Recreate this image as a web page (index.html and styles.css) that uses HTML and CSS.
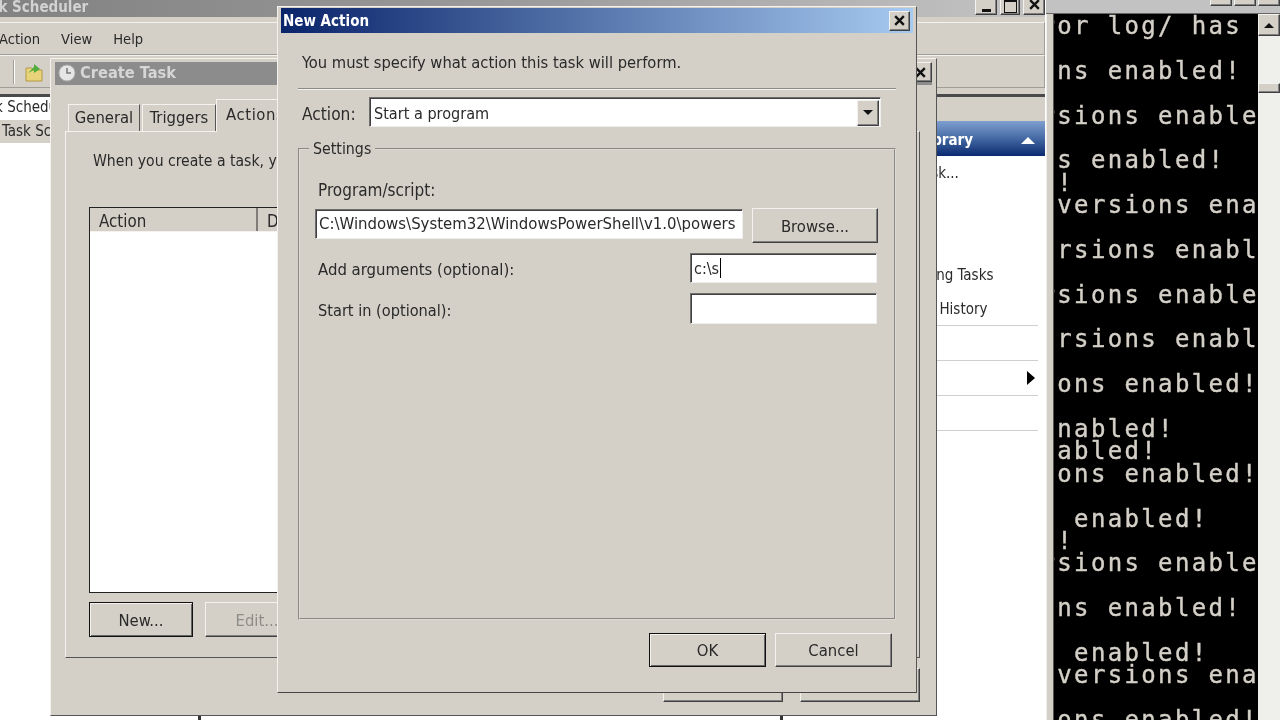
FILE: index.html
```html
<!DOCTYPE html>
<html lang="en">
<head>
<meta charset="utf-8">
<title>New Action</title>
<link rel="stylesheet" href="styles.css">
</head>
<body>
<div class="desktop">

  <section class="win win-sched">
    <header class="sched-title">
      <span class="sched-name">Task Scheduler</span>
      <div class="sched-btns">
        <span class="capbtn raised"><i class="glyph-min"></i></span>
        <span class="capbtn raised"><i class="glyph-max"></i></span>
        <span class="capbtn raised"><svg class="x-icon" viewBox="0 0 12 12"><path d="M2 2 10 10M10 2 2 10"/></svg></span>
      </div>
    </header>
    <nav class="sched-menu">
      <span>Action</span><span>View</span><span>Help</span>
    </nav>
    <div class="sched-tools">
      <i class="tool-sep"></i>
      <svg class="tool-icon" viewBox="0 0 18 20">
        <path d="M1 6h6l1 2h9v11H1z" fill="#e8d27a" stroke="#b59a45"/>
        <path d="M3 11 9 5V2l6 5-6 4V8z" fill="#4fae3c"/>
      </svg>
    </div>
    <div class="sched-body">
      <aside class="tree">
        <div class="tree-row">Task Scheduler (Local)</div>
        <div class="tree-row tree-sel">Task Scheduler Library</div>
      </aside>
      <div class="center-pane"></div>
      <aside class="actions">
        <div class="actions-head">Actions</div>
        <div class="actions-blue"><span>Task Scheduler Library</span><i class="tri-up"></i></div>
        <div class="act-row act-shift">Create Basic Task...</div>
        <div class="act-row">Create Task...</div>
        <div class="act-row">Import Task...</div>
        <div class="act-row">Display All Running Tasks</div>
        <div class="act-row act-shift act-last">Enable All Tasks History</div>
        <div class="act-row act-sep">New Folder...</div>
        <div class="act-row act-sep">View<i class="tri-right"></i></div>
        <div class="act-row act-sep">Refresh</div>
        <div class="act-row act-sep">Help</div>
      </aside>
    </div>
  </section>

  <section class="win win-term">
    <header class="term-title">
      <span class="capbtn raised"></span><span class="capbtn raised"></span><span class="capbtn raised"></span>
    </header>
    <div class="term-body">
      <div class="term-text">
        <div class="tl">ror log/ has</div>
        <div class="tl"></div>
        <div class="tl">ons enabled!</div>
        <div class="tl"></div>
        <div class="tl">rsions enable</div>
        <div class="tl"></div>
        <div class="tl">ns enabled!</div>
        <div class="tl">d!</div>
        <div class="tl"> versions ena</div>
        <div class="tl"></div>
        <div class="tl">ersions enabl</div>
        <div class="tl"></div>
        <div class="tl">rsions enable</div>
        <div class="tl"></div>
        <div class="tl">ersions enabl</div>
        <div class="tl"></div>
        <div class="tl">ions enabled!</div>
        <div class="tl"></div>
        <div class="tl">enabled!</div>
        <div class="tl">nabled!</div>
        <div class="tl">ions enabled!</div>
        <div class="tl"></div>
        <div class="tl">s enabled!</div>
        <div class="tl">d!</div>
        <div class="tl">rsions enable</div>
        <div class="tl"></div>
        <div class="tl">ons enabled!</div>
        <div class="tl"></div>
        <div class="tl">s enabled!</div>
        <div class="tl"> versions ena</div>
        <div class="tl"></div>
        <div class="tl">ions enabled!</div>
      </div>
      <div class="term-scroll">
        <span class="sb-btn raised"><i class="tri-up tri-dark"></i></span>
        <span class="sb-gap"></span>
        <span class="sb-thumb raised"></span>
      </div>
    </div>
  </section>

  <section class="win win-create">
    <header class="create-title">
      <svg class="clock" viewBox="0 0 18 18">
        <circle cx="9" cy="9" r="8" fill="#e6e6e6" stroke="#b0b0b0"/>
        <path d="M9 4v5h4" fill="none" stroke="#777" stroke-width="1.5"/>
      </svg>
      <span class="create-name">Create Task</span>
      <span class="capbtn raised create-close"><svg class="x-icon" viewBox="0 0 12 12"><path d="M2 2 10 10M10 2 2 10"/></svg></span>
    </header>
    <div class="tabs">
      <span class="tab">General</span>
      <span class="tab">Triggers</span>
      <span class="tab tab-active">Actions</span>
    </div>
    <div class="tab-panel">
      <p class="create-intro">When you create a task, you must specify the action that will occur when your task starts.</p>
      <div class="action-table">
        <div class="table-head">
          <span class="th th-action">Action</span>
          <span class="th">Details</span>
        </div>
      </div>
      <div class="table-btns">
        <button class="btn btn-default btn-new">New...</button>
        <button class="btn btn-new btn-off">Edit...</button>
        <button class="btn btn-new">Delete...</button>
      </div>
    </div>
    <div class="create-foot">
      <button class="btn btn-foot">OK</button>
      <button class="btn btn-foot">Cancel</button>
    </div>
  </section>

  <section class="win win-action">
    <header class="action-title">
      <span>New Action</span>
      <span class="capbtn raised action-close"><svg class="x-icon" viewBox="0 0 12 12"><path d="M2 2 10 10M10 2 2 10"/></svg></span>
    </header>
    <div class="action-body">
      <p class="action-intro">You must specify what action this task will perform.</p>
      <hr class="groove">
      <div class="action-row">
        <label class="action-label">Action:</label>
        <div class="combo sunken">
          <span class="combo-value">Start a program</span>
          <span class="combo-btn raised"><i class="tri-down"></i></span>
        </div>
      </div>
      <fieldset class="settings">
        <legend class="settings-legend">Settings</legend>
        <div class="field-label">Program/script:</div>
        <div class="prog-row">
          <div class="field sunken field-prog"><span class="prog-clip">C:\Windows\System32\WindowsPowerShell\v1.0\powershell.exe</span></div>
          <button class="btn btn-browse">Browse...</button>
        </div>
        <div class="arg-row">
          <span class="arg-label arg-wide">Add arguments (optional):</span>
          <div class="field sunken field-arg">c:\s<i class="caret"></i></div>
        </div>
        <div class="arg-row">
          <span class="arg-label">Start in (optional):</span>
          <div class="field sunken field-arg field-start"></div>
        </div>
      </fieldset>
      <div class="action-foot">
        <button class="btn btn-default btn-ok">OK</button>
        <button class="btn btn-ok">Cancel</button>
      </div>
    </div>
  </section>

</div>
</body>
</html>
```
FILE: styles.css
```css
* { box-sizing: border-box; }
html, body { margin: 0; height: 100%; }
body {
  overflow: hidden;
  background: #fff;
  font-family: "DejaVu Sans", Tahoma, sans-serif;
  font-stretch: condensed;
  font-size: 15px;
  color: #2a2a2a;
}
.desktop { position: relative; width: 1280px; height: 720px; overflow: hidden; background: #fff; filter: blur(0.35px); }
.win { position: absolute; display: flex; flex-direction: column; isolation: isolate; }
p { margin: 0; }
i { display: block; }

.raised {
  background: #d4d0c8;
  border: 1px solid;
  border-color: #f4f2ee #404040 #404040 #f4f2ee;
  box-shadow: inset -1px -1px #808080;
}
.sunken {
  background: #fff;
  border: 1px solid;
  border-color: #6e6e6e #eeeeee #eeeeee #6e6e6e;
  box-shadow: inset 1px 1px #404040;
}
.capbtn { display: flex; align-items: center; justify-content: center; flex: none; }
.x-icon { width: 13px; height: 13px; fill: none; stroke: #111; stroke-width: 2.2; }

.btn {
  font: inherit;
  font-size: 16.5px;
  color: inherit;
  background: #d4d0c8;
  border: 1px solid;
  border-color: #f4f2ee #404040 #404040 #f4f2ee;
  box-shadow: inset -1px -1px #808080;
  padding: 1px 0 0;
}
.btn-default { border-color: #111; box-shadow: inset 1px 1px #f4f2ee, inset -1px -1px #666; }
.btn-off { color: #8f8d88; }

/* Task Scheduler window */
.win-sched { left: -40px; top: 0; width: 1085px; height: 720px; background: #d4d0c8; }
.sched-title {
  height: 17px; flex: none; display: flex; justify-content: space-between;
  background: linear-gradient(90deg, #808080 0%, #9a9a9a 50%, #c4c4c4 100%);
}
.sched-name { font-weight: bold; color: #d2d2d2; padding-left: 14px; line-height: 14px; }
.sched-btns { display: flex; gap: 3px; margin-top: -6px; height: 21px; }
.sched-btns .capbtn { width: 22px; }
.sched-btns .capbtn:nth-child(2) { width: 20px; }
.glyph-min { width: 9px; height: 3px; background: #111; margin-top: 11px; }
.glyph-max { width: 13px; height: 13px; border: 1px solid #111; border-top-width: 2px; margin-top: 4px; }
.sched-menu {
  margin-top: 5px; height: 33px; flex: none; display: flex; align-items: center; gap: 21px;
  padding-left: 38px; border: 1px solid; border-color: #f4f2ee #a09d96 #a09d96 #f4f2ee;
  font-size: 14.6px;
}
.sched-tools {
  height: 33px; flex: none; display: flex; align-items: center; gap: 11px; padding-left: 52px;
  border: 1px solid; border-color: #f4f2ee #a09d96 #a09d96 #f4f2ee;
}
.tool-sep { width: 2px; height: 24px; border-left: 1px solid #a09d96; border-right: 1px solid #fff; }
.tool-icon { width: 18px; height: 20px; margin-left: -1px; }
.sched-body { margin-top: 6px; border-top: 3px solid #4a4a4a; flex: 1; display: flex; background: #fff; }
.tree { width: 238px; flex: none; }
.tree-row { height: 23px; line-height: 23px; white-space: nowrap; }
.tree-row:first-child { padding-left: 14px; line-height: 21px; }
.tree-sel { background: #d4d0c8; padding-left: 42px; }
.center-pane { width: 585px; flex: none; border: 1px solid #333; border-width: 0 3px; }
.actions { width: 262px; flex: none; padding-left: 7px; }
.actions-head { height: 24px; background: #d4d0c8; line-height: 23px; padding-left: 10px; }
.actions-blue {
  height: 35px; display: flex; align-items: center; justify-content: space-between;
  padding: 3px 10px 0 10px; color: #fff; font-weight: bold;
  background: linear-gradient(180deg, #7f9fd0 0%, #4a6fa8 45%, #0a2a70 100%);
}
.tri-up { width: 0; height: 0; border: 7px solid transparent; border-top: 0; border-bottom: 7px solid #fff; }
.tri-dark { border-width: 0 5px 5px; border-bottom-color: #111; }
.tri-down { width: 0; height: 0; border: 5px solid transparent; border-bottom: 0; border-top: 5px solid #111; }
.tri-right { width: 0; height: 0; border: 7px solid transparent; border-right: 0; border-left: 8px solid #000; position: absolute; right: 3px; top: 10px; }
.act-row { position: relative; height: 34px; line-height: 34px; padding-left: 33px; white-space: nowrap; margin-right: 7px; }
.act-shift { padding-left: 38px; }
.act-last { height: 33px; line-height: 35px; }
.act-sep { height: 35px; border-top: 1px solid #cfcfcf; }

/* terminal */
.win-term { left: 1046px; top: 0; width: 234px; height: 720px; background: #d4d0c8; }
.term-title {
  height: 14px; flex: none; display: flex; justify-content: flex-end; gap: 2px; overflow: hidden;
  background: #c2c2c2; border-bottom: 1px solid #666; padding-left: 7px;
}
.term-title .capbtn { width: 22px; height: 24px; margin-top: -18px; }
.term-body { flex: 1; display: flex; min-height: 0; padding-left: 6px; border-left: 1px solid #eeeeee; }
.term-text {
  width: 205px; flex: none; background: #000; overflow: hidden; border-left: 1px solid #555; padding-top: 1px;
  font-family: "DejaVu Sans Mono", "Liberation Mono", monospace; font-stretch: normal;
  font-size: 24px; letter-spacing: 2.35px; color: #d4d0c8; -webkit-text-stroke: 0.4px #d4d0c8;
}
.tl { height: 22.4px; line-height: 22.4px; white-space: pre; margin-left: -13.5px; }
.term-scroll { flex: 1; display: flex; flex-direction: column; background: #efefec; }
.sb-btn { height: 22px; flex: none; display: flex; align-items: center; justify-content: center; }
.sb-gap { height: 47px; flex: none; }
.sb-thumb { height: 10px; flex: none; }

/* Create Task */
.win-create {
  left: 50px; top: 58px; width: 887px; height: 658px; padding: 3px 4px;
  background: #d4d0c8; border: 1px solid; border-color: #f4f2ee #555 #555 #f4f2ee;
}
.create-title { height: 23px; flex: none; display: flex; align-items: center; background: #8c8c8c; padding-bottom: 2px; }
.clock { width: 18px; height: 18px; margin-left: 3px; flex: none; }
.create-name { font-weight: bold; color: #d6d6d6; margin-left: 4px; font-size: 16.3px; }
.create-close { width: 23px; height: 20px; margin-left: auto; margin-top: -1px; }
.tabs { height: 32px; margin-top: 14px; flex: none; display: flex; align-items: flex-end; padding-left: 13px; position: relative; z-index: 1; font-size: 16.5px; }
.tab {
  height: 27px; padding-top: 1px; text-align: center; width: 72px;
  border: 1px solid; border-color: #f4f2ee #555 transparent #f4f2ee; border-bottom: 0;
  background: #d4d0c8; line-height: 24px; margin-right: 2px;
}
.tab:nth-child(2) { width: 74px; margin-right: 0; }
.tab-active { height: 33px; width: 92px; margin-bottom: -1px; padding: 0 0 0 9px; line-height: 29px; text-align: left; letter-spacing: 0.6px; }
.tab-panel {
  margin: 0 12px 0 10px; height: 527px; flex: none; padding: 19px 0 0 23px; overflow: hidden;
  border: 1px solid; border-color: #f4f2ee #555 #555 #f4f2ee;
}
.create-intro { line-height: 20px; padding-left: 4px; white-space: nowrap; font-size: 15.6px; }
.action-table { width: 806px; height: 386px; margin-top: 36px; background: #fff; border: 1px solid #222; }
.table-head { display: flex; height: 24px; background: #d4d0c8; line-height: 26px; border-bottom: 1px solid #f4f2ee; font-size: 16.8px; }
.th { padding-left: 9px; }
.th-action { width: 168px; border-right: 2px solid #807d78; }
.table-btns { display: flex; gap: 12px; margin-top: 9px; }
.btn-new { width: 104px; height: 35px; }
.create-foot { display: flex; justify-content: flex-end; gap: 17px; margin: 10px 12px 0 0; }
.btn-foot { width: 120px; height: 34px; }

/* New Action */
.win-action {
  left: 277px; top: 6px; width: 640px; height: 687px; padding: 1px 3px 3px;
  background: #d4d0c8; border: 1px solid; border-color: #f4f2ee #555 #444 #f4f2ee;
}
.action-title {
  height: 25px; flex: none; display: flex; align-items: center; justify-content: space-between;
  padding: 0 3px 0 2px; color: #fff; font-weight: bold; font-size: 15px;
  background: linear-gradient(90deg, #0a246a 0%, #a6caf0 100%);
}
.action-close { width: 21px; height: 20px; }
.action-body { flex: 1; display: flex; flex-direction: column; padding: 0 17px; font-size: 16.4px; }
.action-intro { margin-top: 19px; padding: 1px 0 0 4px; line-height: 20px; height: 20px; }
.groove { width: 598px; height: 2px; margin: 16px 0 0; border: 0; border-top: 1px solid #8c8a85; border-bottom: 1px solid #f4f2ee; }
.action-row { display: flex; align-items: center; margin-top: 7px; height: 30px; }
.action-label { width: 71px; padding: 3px 0 0 4px; flex: none; font-size: 17.2px; }
.combo { width: 512px; height: 30px; display: flex; align-items: center; justify-content: space-between; padding-left: 4px; }
.combo-value { padding-top: 2px; font-size: 16.1px; }
.combo-btn { width: 22px; height: 26px; margin-right: 1px; margin-top: 1px; display: flex; align-items: center; justify-content: center; }
.settings {
  width: 598px; height: 482px; margin: 11px 0 0; padding: 0; min-width: 0;
  border: 2px groove #dedbd4;
}
.settings-legend { margin-left: 9px; padding: 1px 4px 0; line-height: 20px; font-size: 15.8px; }
.field-label { margin: 21px 0 0 18px; line-height: 20px; font-size: 17px; height: 20px; }
.prog-row { display: flex; gap: 9px; margin: 8px 0 0 15px; height: 35px; }
.field { display: flex; align-items: center; padding-left: 3px; overflow: hidden; font-size: 16px; }
.field-prog { width: 428px; height: 30px; margin-top: 1px; font-size: 16.6px; }
.prog-clip { display: block; width: 423px; height: 22px; line-height: 22px; overflow: hidden; word-break: break-all; }
.btn-browse { width: 126px; height: 35px; padding-top: 1px; }
.arg-row { display: flex; align-items: center; margin: 10px 0 0 18px; }
.arg-label { width: 372px; flex: none; padding-top: 3px; font-size: 16.2px; }
.arg-wide { font-size: 16.6px; }
.field-arg { width: 187px; height: 30px; }
.field-start { height: 31px; }
.caret { width: 1px; height: 20px; background: #000; margin-left: 1px; }
.action-foot { display: flex; justify-content: flex-end; gap: 9px; margin-top: 13px; padding-right: 4px; }
.btn-ok { width: 117px; height: 34px; }
```
